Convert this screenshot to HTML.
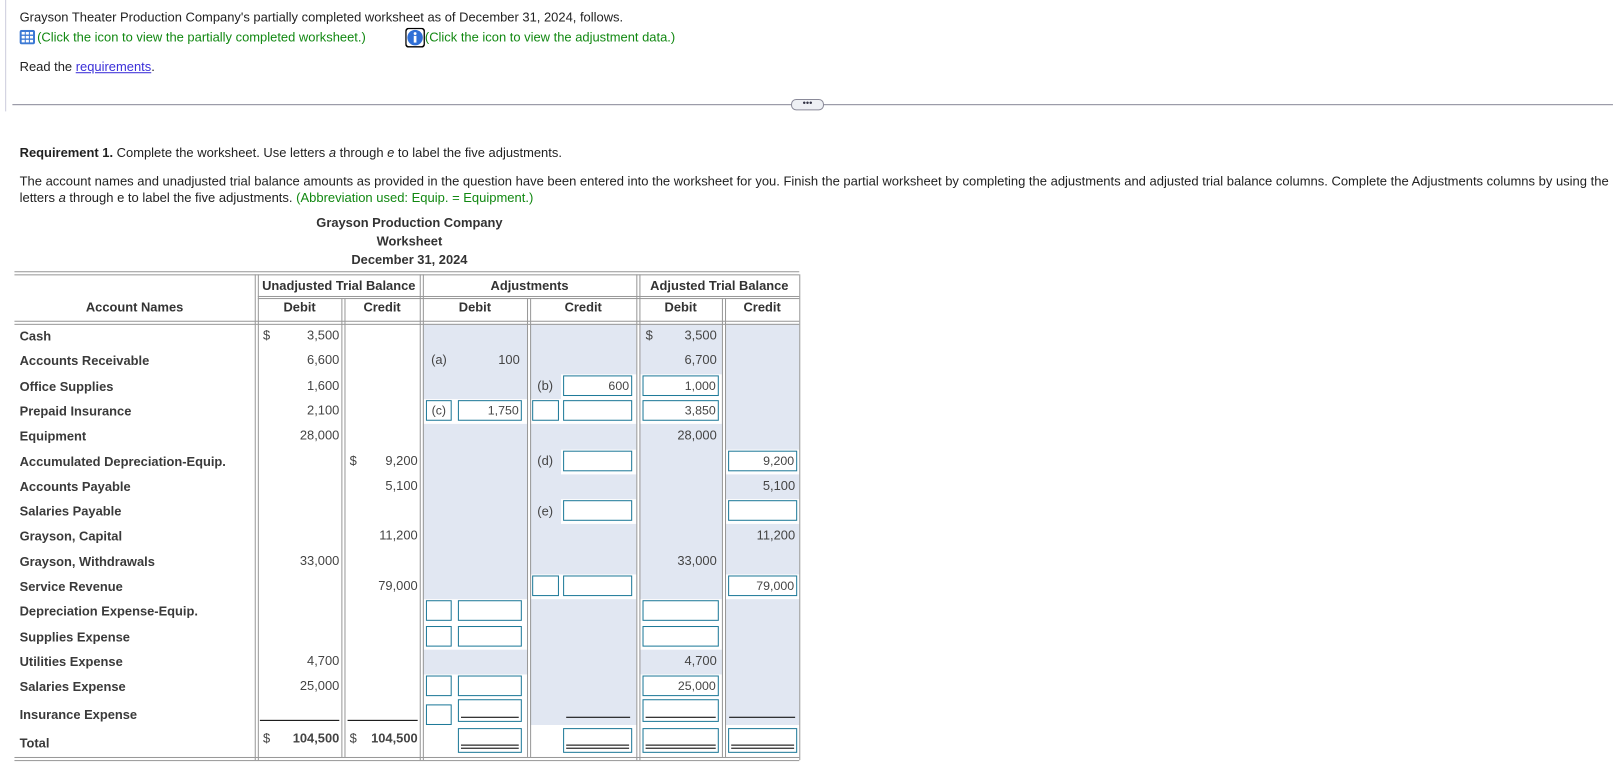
<!DOCTYPE html>
<html><head><meta charset="utf-8">
<style>
html,body{margin:0;padding:0;background:#fff;overflow:hidden;width:1613px;height:767px}
#w{position:absolute;left:0;top:0;width:1564px;height:744px;transform:scale(1.0313);transform-origin:0 0;font-family:"Liberation Sans",Arial,sans-serif;color:#222}
.a{position:absolute;white-space:nowrap}
.t{font-size:12.55px}
.g{color:#118811}
.sh{position:absolute;background:#e1e7f2}
.wh{position:absolute;background:#fff}
.in{position:absolute;background:#fff;border:1px solid #1f7a99;box-sizing:border-box;height:20px;font-size:12px;color:#444;text-align:right;line-height:18px;padding-right:2px}
.v{position:absolute;width:1px;background:#999}
.h{position:absolute;height:1px;background:#999}
.lb{position:absolute;left:19px;font-size:12.5px;font-weight:bold;color:#3a3a3a;white-space:nowrap}
.n{position:absolute;font-size:12.5px;color:#444;text-align:right;white-space:nowrap}
.hd{position:absolute;font-size:12.5px;font-weight:bold;color:#333;text-align:center;white-space:nowrap}
.ul{position:absolute;height:1px;background:#000}
.ul2{position:absolute;height:4px;border-top:1px solid #000;border-bottom:1px solid #000;box-sizing:border-box}
</style></head><body><div id="w">
<div class="v" style="left:5px;top:0;height:108px;background:#ccd"></div>
<div class="a t" style="left:19px;top:10px">Grayson Theater Production Company's partially completed worksheet as of December 31, 2024, follows.</div>
<svg class="a" style="left:19px;top:29px" width="15" height="14" viewBox="0 0 15 14"><rect width="15" height="14" rx="2" fill="#3b79d4"/><g fill="#fff"><rect x="2" y="2" width="3" height="2.5"/><rect x="6" y="2" width="3" height="2.5"/><rect x="10" y="2" width="3" height="2.5"/><rect x="2" y="5.8" width="3" height="2.5"/><rect x="6" y="5.8" width="3" height="2.5"/><rect x="10" y="5.8" width="3" height="2.5"/><rect x="2" y="9.6" width="3" height="2.5"/><rect x="6" y="9.6" width="3" height="2.5"/><rect x="10" y="9.6" width="3" height="2.5"/></g></svg>
<div class="a t g" style="left:36px;top:29px">(Click the icon to view the partially completed worksheet.)</div>
<svg class="a" style="left:393px;top:27px" width="19" height="19" viewBox="0 0 19 19"><rect x="0.5" y="0.5" width="18" height="18" rx="3" fill="#fff" stroke="#000" stroke-width="1.5"/><circle cx="9.5" cy="9.5" r="7.5" fill="#2f6fd6"/><circle cx="9.5" cy="5.5" r="1.4" fill="#fff"/><rect x="8.2" y="7.8" width="2.6" height="6.5" fill="#fff"/></svg>
<div class="a t g" style="left:412px;top:29px">(Click the icon to view the adjustment data.)</div>
<div class="a t" style="left:19px;top:58px">Read the <span style="color:#3a2fd8;text-decoration:underline">requirements</span>.</div>
<div class="h" style="left:12px;top:101px;width:1552px;background:#8a8a99"></div>
<div class="a" style="left:767px;top:96px;width:30px;height:9px;border:1px solid #8a8a99;border-radius:5px;background:#eef0f4;font-size:9px;line-height:6px;text-align:center;color:#334">•••</div>
<div class="a t" style="left:19px;top:141px"><b>Requirement 1.</b> Complete the worksheet. Use letters <i>a</i> through <i>e</i> to label the five adjustments.</div>
<div class="a t" style="left:19px;top:169px;font-size:12.6px">The account names and unadjusted trial balance amounts as provided in the question have been entered into the worksheet for you. Finish the partial worksheet by completing the adjustments and adjusted trial balance columns. Complete the Adjustments columns by using the</div>
<div class="a t" style="left:19px;top:185px;font-size:12.6px">letters <i>a</i> through e to label the five adjustments. <span class="g">(Abbreviation used: Equip. = Equipment.)</span></div>
<div class="hd" style="left:250px;width:294px;top:209px">Grayson Production Company</div>
<div class="hd" style="left:250px;width:294px;top:227px">Worksheet</div>
<div class="hd" style="left:250px;width:294px;top:245px">December 31, 2024</div>

<!-- shading -->
<div class="sh" style="left:410px;top:314px;width:101px;height:389px"></div>
<div class="sh" style="left:514px;top:314px;width:103px;height:389px"></div>
<div class="sh" style="left:620px;top:314px;width:80px;height:389px"></div>
<div class="sh" style="left:703px;top:314px;width:72px;height:389px"></div>
<!-- white subcells -->
<div class="wh" style="left:544px;top:363px;width:73px;height:24px"></div>
<div class="wh" style="left:620px;top:363px;width:80px;height:48px"></div>
<div class="wh" style="left:410px;top:387px;width:101px;height:24px"></div>
<div class="wh" style="left:514px;top:387px;width:103px;height:24px"></div>
<div class="wh" style="left:544px;top:436px;width:73px;height:24px"></div>
<div class="wh" style="left:703px;top:436px;width:72px;height:24px"></div>
<div class="wh" style="left:544px;top:484px;width:73px;height:24px"></div>
<div class="wh" style="left:703px;top:484px;width:72px;height:24px"></div>
<div class="wh" style="left:514px;top:557px;width:103px;height:24px"></div>
<div class="wh" style="left:703px;top:557px;width:72px;height:24px"></div>
<div class="wh" style="left:410px;top:581px;width:101px;height:49px"></div>
<div class="wh" style="left:620px;top:581px;width:80px;height:49px"></div>
<div class="wh" style="left:410px;top:654px;width:101px;height:49px"></div>
<div class="wh" style="left:620px;top:654px;width:80px;height:49px"></div>

<!-- lines -->
<div class="h" style="left:14px;top:263px;width:761px"></div>
<div class="h" style="left:14px;top:266px;width:761px"></div>
<div class="h" style="left:250px;top:287px;width:525px"></div>
<div class="h" style="left:250px;top:289px;width:525px"></div>
<div class="h" style="left:14px;top:311px;width:761px"></div>
<div class="h" style="left:14px;top:314px;width:761px"></div>
<div class="h" style="left:14px;top:734px;width:761px"></div>
<div class="h" style="left:14px;top:737px;width:761px"></div>
<div class="v" style="left:247px;top:266px;height:471px"></div>
<div class="v" style="left:250px;top:266px;height:471px"></div>
<div class="v" style="left:331px;top:289px;height:445px"></div>
<div class="v" style="left:334px;top:289px;height:445px"></div>
<div class="v" style="left:407px;top:266px;height:471px"></div>
<div class="v" style="left:410px;top:266px;height:471px"></div>
<div class="v" style="left:511px;top:289px;height:445px"></div>
<div class="v" style="left:514px;top:289px;height:445px"></div>
<div class="v" style="left:617px;top:266px;height:471px"></div>
<div class="v" style="left:620px;top:266px;height:471px"></div>
<div class="v" style="left:700px;top:289px;height:445px"></div>
<div class="v" style="left:703px;top:289px;height:445px"></div>
<div class="v" style="left:775px;top:266px;height:471px"></div>

<!-- headers -->
<div class="hd" style="left:250px;width:157px;top:270px">Unadjusted Trial Balance</div>
<div class="hd" style="left:410px;width:207px;top:270px">Adjustments</div>
<div class="hd" style="left:620px;width:155px;top:270px">Adjusted Trial Balance</div>
<div class="hd" style="left:14px;width:233px;top:291px">Account Names</div>
<div class="hd" style="left:250px;width:81px;top:291px">Debit</div>
<div class="hd" style="left:334px;width:73px;top:291px">Credit</div>
<div class="hd" style="left:410px;width:101px;top:291px">Debit</div>
<div class="hd" style="left:514px;width:103px;top:291px">Credit</div>
<div class="hd" style="left:620px;width:80px;top:291px">Debit</div>
<div class="hd" style="left:703px;width:72px;top:291px">Credit</div>

<!-- labels -->
<div class="lb" style="top:319px">Cash</div>
<div class="lb" style="top:343px">Accounts Receivable</div>
<div class="lb" style="top:368px">Office Supplies</div>
<div class="lb" style="top:392px">Prepaid Insurance</div>
<div class="lb" style="top:416px">Equipment</div>
<div class="lb" style="top:441px">Accumulated Depreciation-Equip.</div>
<div class="lb" style="top:465px">Accounts Payable</div>
<div class="lb" style="top:489px">Salaries Payable</div>
<div class="lb" style="top:513px">Grayson, Capital</div>
<div class="lb" style="top:538px">Grayson, Withdrawals</div>
<div class="lb" style="top:562px">Service Revenue</div>
<div class="lb" style="top:586px">Depreciation Expense-Equip.</div>
<div class="lb" style="top:611px">Supplies Expense</div>
<div class="lb" style="top:635px">Utilities Expense</div>
<div class="lb" style="top:659px">Salaries Expense</div>
<div class="lb" style="top:686px">Insurance Expense</div>
<div class="lb" style="top:714px">Total</div>

<!-- unadjusted -->
<div class="n" style="left:255px;top:318px">$</div>
<div class="n" style="left:251px;width:78px;top:318px">3,500</div>
<div class="n" style="left:251px;width:78px;top:342px">6,600</div>
<div class="n" style="left:251px;width:78px;top:367px">1,600</div>
<div class="n" style="left:251px;width:78px;top:391px">2,100</div>
<div class="n" style="left:251px;width:78px;top:415px">28,000</div>
<div class="n" style="left:339px;top:440px">$</div>
<div class="n" style="left:335px;width:70px;top:440px">9,200</div>
<div class="n" style="left:335px;width:70px;top:464px">5,100</div>
<div class="n" style="left:335px;width:70px;top:512px">11,200</div>
<div class="n" style="left:251px;width:78px;top:537px">33,000</div>
<div class="n" style="left:335px;width:70px;top:561px">79,000</div>
<div class="n" style="left:251px;width:78px;top:634px">4,700</div>
<div class="n" style="left:251px;width:78px;top:658px">25,000</div>
<div class="ul" style="left:252px;top:698px;width:77px"></div>
<div class="ul" style="left:337px;top:698px;width:68px"></div>
<div class="n" style="left:255px;top:709px">$</div>
<div class="n" style="left:251px;width:78px;top:709px;font-weight:bold">104,500</div>
<div class="n" style="left:339px;top:709px">$</div>
<div class="n" style="left:335px;width:70px;top:709px;font-weight:bold">104,500</div>

<!-- adjustments -->
<div class="n" style="left:418px;top:342px">(a)</div>
<div class="n" style="left:441px;width:63px;top:342px">100</div>
<div class="n" style="left:521px;top:367px">(b)</div>
<div class="in" style="left:546px;top:364px;width:67px">600</div>
<div class="in" style="left:413px;top:388px;width:25px;text-align:center;padding:0">(c)</div>
<div class="in" style="left:444px;top:388px;width:62px">1,750</div>
<div class="in" style="left:516px;top:388px;width:26px"></div>
<div class="in" style="left:546px;top:388px;width:67px"></div>
<div class="n" style="left:521px;top:440px">(d)</div>
<div class="in" style="left:546px;top:437px;width:67px"></div>
<div class="n" style="left:521px;top:489px">(e)</div>
<div class="in" style="left:546px;top:485px;width:67px"></div>
<div class="in" style="left:516px;top:558px;width:26px"></div>
<div class="in" style="left:546px;top:558px;width:67px"></div>
<div class="in" style="left:413px;top:582px;width:25px"></div>
<div class="in" style="left:444px;top:582px;width:62px"></div>
<div class="in" style="left:413px;top:607px;width:25px"></div>
<div class="in" style="left:444px;top:607px;width:62px"></div>
<div class="in" style="left:413px;top:655px;width:25px"></div>
<div class="in" style="left:444px;top:655px;width:62px"></div>
<div class="in" style="left:413px;top:683px;width:25px"></div>
<div class="in" style="left:444px;top:678px;width:62px;height:22px"></div>
<div class="ul" style="left:447px;top:695px;width:56px"></div>
<div class="ul" style="left:549px;top:695px;width:62px"></div>
<div class="in" style="left:444px;top:706px;width:62px;height:24px"></div>
<div class="ul2" style="left:447px;top:722px;width:56px"></div>
<div class="in" style="left:546px;top:706px;width:67px;height:24px"></div>
<div class="ul2" style="left:549px;top:722px;width:61px"></div>

<!-- adjusted -->
<div class="n" style="left:626px;top:318px">$</div>
<div class="n" style="left:620px;width:75px;top:318px">3,500</div>
<div class="n" style="left:620px;width:75px;top:342px">6,700</div>
<div class="in" style="left:623px;top:364px;width:74px">1,000</div>
<div class="in" style="left:623px;top:388px;width:74px">3,850</div>
<div class="n" style="left:620px;width:75px;top:415px">28,000</div>
<div class="in" style="left:706px;top:437px;width:67px">9,200</div>
<div class="n" style="left:703px;width:68px;top:464px">5,100</div>
<div class="in" style="left:706px;top:485px;width:67px"></div>
<div class="n" style="left:703px;width:68px;top:512px">11,200</div>
<div class="n" style="left:620px;width:75px;top:537px">33,000</div>
<div class="in" style="left:706px;top:558px;width:67px">79,000</div>
<div class="in" style="left:623px;top:582px;width:74px"></div>
<div class="in" style="left:623px;top:607px;width:74px"></div>
<div class="n" style="left:620px;width:75px;top:634px">4,700</div>
<div class="in" style="left:623px;top:655px;width:74px">25,000</div>
<div class="in" style="left:623px;top:678px;width:74px;height:22px"></div>
<div class="ul" style="left:626px;top:695px;width:68px"></div>
<div class="ul" style="left:707px;top:695px;width:64px"></div>
<div class="in" style="left:623px;top:706px;width:74px;height:24px"></div>
<div class="ul2" style="left:626px;top:722px;width:68px"></div>
<div class="in" style="left:706px;top:706px;width:67px;height:24px"></div>
<div class="ul2" style="left:709px;top:722px;width:61px"></div>
</div></body></html>
